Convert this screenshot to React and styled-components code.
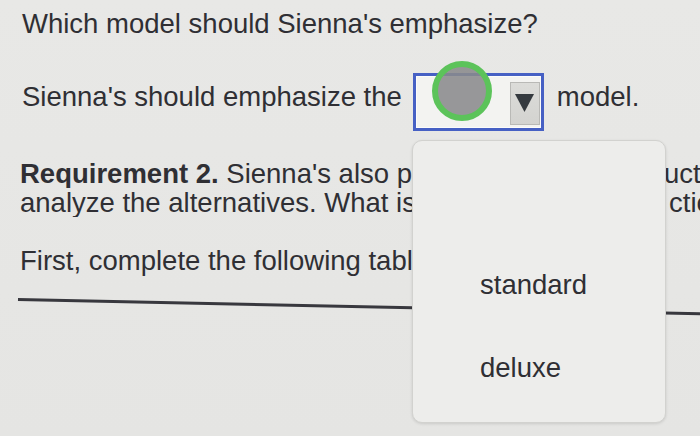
import React from "react";
import styled, { createGlobalStyle } from "styled-components";

const Global = createGlobalStyle`
  html, body {
    margin: 0;
    padding: 0;
    background: #e7e7e5;
    overflow: hidden;
  }
  body {
    font-family: "Liberation Sans", Arial, Helvetica, sans-serif;
    color: #2f2f34;
  }
`;

const Page = styled.div`
  position: relative;
  width: 700px;
  height: 436px;
  padding: 9px 0 0 20px;
  box-sizing: border-box;
  background: linear-gradient(180deg, #e8e8e6 0%, #e5e5e3 100%);
  overflow: hidden;
`;

const Title = styled.div`
  font-size: 27.5px;
  line-height: 30px;
  margin-left: 2px;
  white-space: nowrap;
`;

const AnswerRow = styled.div`
  display: flex;
  align-items: flex-start;
  margin-top: 34px;
  margin-left: 2px;
`;

const RowText = styled.span`
  font-size: 27.5px;
  line-height: 30px;
  padding-top: 9px;
  white-space: nowrap;
  margin-left: ${(p) => p.$ml || 0}px;
`;

const SelectBox = styled.div`
  position: relative;
  margin-left: 11px;
  width: 131px;
  height: 58px;
  box-sizing: border-box;
  border: 3px solid #4660c4;
  background: #f3f3f1;
  box-shadow: inset 0 0 0 1px #fbfbfa;
  display: flex;
  align-items: center;
  justify-content: flex-end;
  padding-right: 1px;
`;

const ArrowButton = styled.div`
  width: 30px;
  height: 43px;
  margin-top: 2px;
  box-sizing: border-box;
  border: 1px solid #b9b9b6;
  background: linear-gradient(180deg, #dcdcd9 0%, #d3d3d0 100%);
  display: flex;
  align-items: center;
  justify-content: center;
`;

const Touch = styled.div`
  position: absolute;
  left: 16px;
  top: -15px;
  width: 60px;
  height: 60px;
  box-sizing: border-box;
  border-radius: 50%;
  border: 6px solid #5cc35a;
  background: rgba(138, 138, 140, 0.88);
`;

const Para = styled.div`
  margin-top: 28px;
  font-size: 27.5px;
  line-height: 29px;
`;

const Line = styled.div`
  display: flex;
  white-space: nowrap;
`;

const LeftClip = styled.span`
  width: 620px;
  overflow: hidden;
  flex: none;
`;

const RightPart = styled.span`
  margin-left: ${(p) => p.$offset}px;
`;

const Bold = styled.b`
  font-weight: 700;
`;

const FirstLine = styled.div`
  margin-top: 29px;
  font-size: 27.5px;
  line-height: 30px;
  white-space: nowrap;
`;

const Rule = styled.div`
  margin-top: 22px;
  margin-left: -2px;
  width: 760px;
  height: 2.5px;
  background: #38383e;
  transform: rotate(1.2deg);
  transform-origin: 0 50%;
`;

const Menu = styled.div`
  position: absolute;
  left: 412px;
  top: 140px;
  width: 254px;
  height: 283px;
  box-sizing: border-box;
  padding: 19px 0 15px;
  background: #ededeb;
  border: 1px solid #d2d2cf;
  border-radius: 10px;
  box-shadow: 0 1px 3px rgba(0, 0, 0, 0.12);
  display: flex;
  flex-direction: column;
`;

const Option = styled.div`
  height: 83px;
  line-height: 83px;
  padding-left: 67px;
  font-size: 27.5px;
  color: #2f2f34;
  white-space: nowrap;
`;

export default function App() {
  return (
    <>
      <Global />
      <Page>
        <Title>Which model should Sienna's emphasize?</Title>
        <AnswerRow>
          <RowText>Sienna's should emphasize the</RowText>
          <SelectBox>
            <Touch />
            <ArrowButton>
              <svg width="19" height="18" viewBox="0 0 19 18">
                <polygon points="0,0 19,0 9.5,18" fill="#353a3f" />
              </svg>
            </ArrowButton>
          </SelectBox>
          <RowText $ml={13}>model.</RowText>
        </AnswerRow>
        <Para>
          <Line>
            <LeftClip>
              <Bold>Requirement 2.</Bold> Sienna's also plans to introduce a new prod
            </LeftClip>
            <RightPart $offset={24}>uct line</RightPart>
          </Line>
          <Line>
            <LeftClip>analyze the alternatives. What is the better course of a</LeftClip>
            <RightPart $offset={29}>ction</RightPart>
          </Line>
        </Para>
        <FirstLine>First, complete the following table.</FirstLine>
        <Rule />
        <Menu>
          <Option>&nbsp;</Option>
          <Option>standard</Option>
          <Option>deluxe</Option>
        </Menu>
      </Page>
    </>
  );
}
